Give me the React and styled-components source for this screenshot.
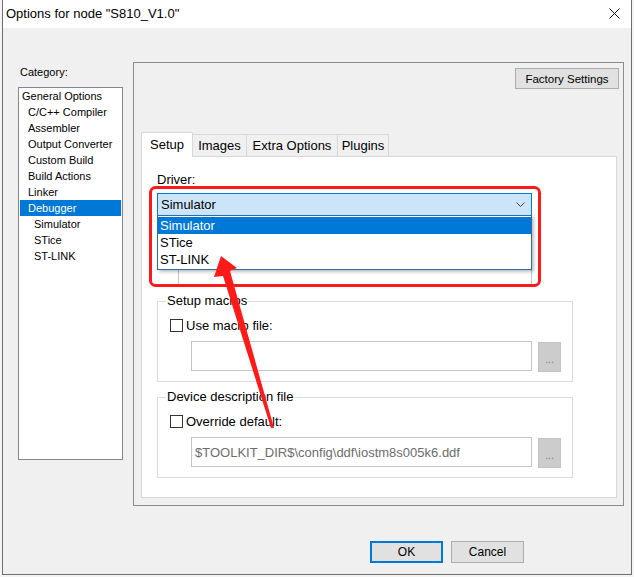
import styled, { createGlobalStyle } from 'styled-components';

const GlobalStyle = createGlobalStyle`
  html, body { margin: 0; padding: 0; background: #f4f4f4; }
  body { font-family: 'Liberation Sans', Arial, sans-serif; color: #000; }
  * { box-sizing: border-box; }
`;

const Root = styled.div`
  position: relative;
  width: 634px;
  height: 577px;
  overflow: hidden;
`;

const Window = styled.div`
  margin-left: 2px;
  width: 630px;
  height: 575px;
  border: 1px solid #6f6f6f;
  border-top: none;
  background: #f0f0f0;
  display: flex;
  flex-direction: column;
`;

const TitleBar = styled.div`
  height: 28px;
  background: #fff;
  display: flex;
  align-items: center;
  justify-content: space-between;
  padding: 0 11px 2px 3px;
  font-size: 13px;
`;

const Main = styled.div`
  display: flex;
  align-items: flex-start;
  margin-top: 34px;
`;

const CategoryCol = styled.div`
  margin-left: 15px;
  width: 105px;
  display: flex;
  flex-direction: column;
`;

const SmallLabel = styled.div`
  font-size: 11px;
  line-height: 14px;
  margin: 3px 0 0 2px;
`;

const TreeList = styled.div`
  margin-top: 8px;
  height: 373px;
  border: 1px solid #828790;
  background: #fff;
  padding-top: 0;
`;

const TreeItem = styled.div`
  height: 16px;
  line-height: 16px;
  font-size: 11px;
  margin-left: 1px;
  margin-right: 1px;
  padding-left: ${p => 2 + p.$level * 6}px;
  background: ${p => (p.$selected ? '#0078d7' : 'transparent')};
  color: ${p => (p.$selected ? '#fff' : '#000')};
  white-space: nowrap;
`;

const Panel = styled.div`
  margin-left: 10px;
  width: 491px;
  height: 444px;
  border: 1px solid #8c8c8c;
  display: flex;
  flex-direction: column;
  padding: 5px 4px 0 7px;
`;

const FactoryRow = styled.div`
  display: flex;
  justify-content: flex-end;
`;

const Button = styled.div`
  height: ${p => p.$h || 22}px;
  width: ${p => p.$w}px;
  background: #e1e1e1;
  border: ${p => (p.$focus ? '2px solid #0078d7' : '1px solid #adadad')};
  font-size: 12px;
  display: flex;
  align-items: center;
  justify-content: center;
`;

const TabBar = styled.div`
  display: flex;
  align-items: flex-end;
  margin-top: 43px;
  margin-bottom: -1px;
  position: relative;
  z-index: 1;
`;

const Tab = styled.div`
  width: ${p => p.$w}px;
  height: ${p => (p.$active ? 25 : 23)}px;
  margin-left: ${p => (p.$first ? 0 : -1)}px;
  border: 1px solid #d9d9d9;
  border-bottom: ${p => (p.$active ? 'none' : '1px solid #d9d9d9')};
  background: ${p => (p.$active ? '#fff' : '#f0f0f0')};
  font-size: 13px;
  display: flex;
  align-items: center;
  justify-content: center;
  padding-bottom: ${p => (p.$active ? 2 : 0)}px;
  position: relative;
  z-index: ${p => (p.$active ? 2 : 1)};
`;

const Page = styled.div`
  position: relative;
  width: 476px;
  height: 342px;
  background: #fff;
  border: 1px solid #d9d9d9;
  padding: 16px 0 0 15px;
  display: flex;
  flex-direction: column;
`;

const Text = styled.div`
  font-size: 13px;
  line-height: 14px;
  white-space: nowrap;
`;

const Combo = styled.div`
  margin-top: 6px;
  width: 375px;
  height: 23px;
  background: #cce4f7;
  border: 1px solid #0078d7;
  display: flex;
  align-items: center;
  justify-content: space-between;
  padding: 0 6px 0 3px;
  font-size: 13px;
`;

const Popup = styled.div`
  position: absolute;
  left: 15px;
  top: 58px;
  width: 375px;
  height: 55px;
  background: #fff;
  border: 1px solid #2a6cb0;
  box-shadow: 2px 2px 3px rgba(0, 0, 0, 0.25);
  padding-top: 1px;
  z-index: 3;
`;

const PopupItem = styled.div`
  height: 17px;
  line-height: 17px;
  font-size: 13px;
  padding-left: 2px;
  background: ${p => (p.$selected ? '#0078d7' : 'transparent')};
  color: ${p => (p.$selected ? '#fff' : '#000')};
`;

const Edit = styled.div`
  width: ${p => p.$w}px;
  height: ${p => p.$h}px;
  margin-left: ${p => p.$ml || 0}px;
  border: 1px solid #c6c6c6;
  background: #fff;
  font-size: 13px;
  color: #6d6d6d;
  display: flex;
  align-items: center;
  padding-left: 3px;
  white-space: nowrap;
`;

const Group = styled.div`
  position: relative;
  width: 416px;
  height: 81px;
  margin-top: ${p => p.$mt}px;
  border: 1px solid #dcdcdc;
  padding: 16px 0 0 12px;
  display: flex;
  flex-direction: column;
`;

const GroupTitle = styled.div`
  position: absolute;
  left: 8px;
  top: -8px;
  padding: 0 1px;
  background: #fff;
  font-size: 13px;
  line-height: 14px;
`;

const CheckRow = styled.div`
  display: flex;
  align-items: center;
  gap: 3px;
  font-size: 13px;
  height: 14px;
`;

const Box = styled.div`
  width: 13px;
  height: 13px;
  border: 1px solid #333;
  background: #fff;
`;

const FileRow = styled.div`
  display: flex;
  align-items: flex-start;
  gap: 6px;
  margin: 9px 0 0 21px;
`;

const Browse = styled.div`
  width: 23px;
  height: 30px;
  margin-top: 1px;
  background: #cccccc;
  border: 1px solid #c4c4c4;
  color: #7a7a7a;
  font-size: 10px;
  display: flex;
  align-items: center;
  justify-content: center;
  padding-top: 4px;
`;

const ButtonRow = styled.div`
  display: flex;
  justify-content: flex-end;
  gap: 8px;
  margin-top: 35px;
  padding-right: 107px;
`;

const Overlay = styled.svg`
  position: absolute;
  left: 0;
  top: 0;
  pointer-events: none;
  z-index: 10;
`;

const categories = [
  ['General Options', 0],
  ['C/C++ Compiler', 1],
  ['Assembler', 1],
  ['Output Converter', 1],
  ['Custom Build', 1],
  ['Build Actions', 1],
  ['Linker', 1],
  ['Debugger', 1, true],
  ['Simulator', 2],
  ['STice', 2],
  ['ST-LINK', 2],
];

const tabs = [
  ['Setup', 52, true],
  ['Images', 55],
  ['Extra Options', 92],
  ['Plugins', 52],
];

export default function App() {
  return (
    <Root>
      <GlobalStyle />
      <Window>
        <TitleBar>
          <span>Options for node "S810_V1.0"</span>
          <svg width="11" height="11" viewBox="0 0 11 11">
            <path d="M0.5 0.5 L10.5 10.5 M10.5 0.5 L0.5 10.5" stroke="#111" strokeWidth="1" fill="none" />
          </svg>
        </TitleBar>
        <Main>
          <CategoryCol>
            <SmallLabel>Category:</SmallLabel>
            <TreeList>
              {categories.map(([name, level, sel]) => (
                <TreeItem key={name} $level={level} $selected={sel}>{name}</TreeItem>
              ))}
            </TreeList>
          </CategoryCol>
          <Panel>
            <FactoryRow>
              <Button $w={104} $h={21} style={{ fontSize: '11.5px' }}>Factory Settings</Button>
            </FactoryRow>
            <TabBar>
              {tabs.map(([name, w, active], i) => (
                <Tab key={name} $w={w} $active={active} $first={i === 0}>{name}</Tab>
              ))}
            </TabBar>
            <Page>
              <Text>Driver:</Text>
              <Combo>
                <span>Simulator</span>
                <svg width="9" height="6" viewBox="0 0 9 6">
                  <path d="M0.5 0.5 L4.5 4.5 L8.5 0.5" stroke="#444" strokeWidth="1" fill="none" />
                </svg>
              </Combo>
              <Popup>
                <PopupItem $selected>Simulator</PopupItem>
                <PopupItem>STice</PopupItem>
                <PopupItem>ST-LINK</PopupItem>
              </Popup>
              <Edit $w={354} $h={23} $ml={21} style={{ marginTop: 46 }} />
              <Group $mt={16}>
                <GroupTitle>Setup macros</GroupTitle>
                <CheckRow><Box />Use macro file:</CheckRow>
                <FileRow>
                  <Edit $w={341} $h={30} />
                  <Browse>...</Browse>
                </FileRow>
              </Group>
              <Group $mt={15}>
                <GroupTitle>Device description file</GroupTitle>
                <CheckRow><Box />Override default:</CheckRow>
                <FileRow>
                  <Edit $w={341} $h={30}>$TOOLKIT_DIR$\config\ddf\iostm8s005k6.ddf</Edit>
                  <Browse>...</Browse>
                </FileRow>
              </Group>
            </Page>
          </Panel>
        </Main>
        <ButtonRow>
          <Button $w={73} $focus>OK</Button>
          <Button $w={73}>Cancel</Button>
        </ButtonRow>
      </Window>
      <Overlay width="634" height="577" viewBox="0 0 634 577">
        <rect x="150.5" y="187.5" width="389" height="98" rx="5" ry="5" fill="none" stroke="#ff1a1a" strokeWidth="3" />
        <polygon points="221,256 237,268 230,271 274,428 271,428 223,276 214,277" fill="#ff1a1a" />
      </Overlay>
    </Root>
  );
}
